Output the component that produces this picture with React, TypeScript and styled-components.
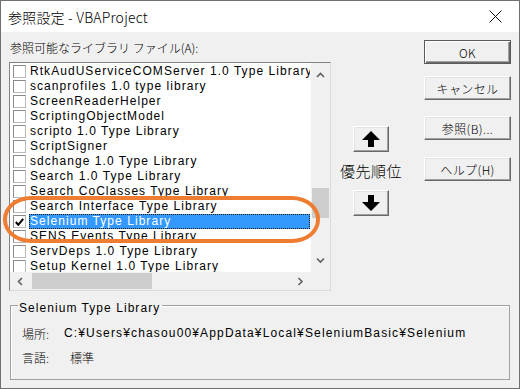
import React from "react";
import styled, { createGlobalStyle, css } from "styled-components";

const uiFont = `"Liberation Sans", "Noto Sans CJK JP", sans-serif`;
const jpFont = `"Noto Sans CJK JP", "Liberation Sans", sans-serif`;

const GlobalStyle = createGlobalStyle`
  html, body {
    margin: 0;
    padding: 0;
    background: #ffffff;
  }
  * {
    box-sizing: border-box;
  }
`;

const Window = styled.div`
  position: relative;
  width: 520px;
  height: 389px;
  border: 1px solid #707070;
  background: #f0f0f0;
  display: flex;
  flex-direction: column;
  color: #000;
  font-family: ${jpFont};
  font-weight: 300;
  overflow: hidden;
`;

const TitleBar = styled.div`
  height: 31px;
  background: #ffffff;
  display: flex;
  align-items: center;
  justify-content: space-between;
  padding-left: 7px;
`;

const Title = styled.div`
  font-size: 14px;
  letter-spacing: 0.2px;
`;

const CloseButton = styled.div`
  width: 46px;
  height: 31px;
  display: flex;
  align-items: center;
  justify-content: center;
  margin-right: 1px;
`;

const Body = styled.div`
  flex: 1;
  display: flex;
  flex-direction: column;
  padding: 0 8px;
`;

const Main = styled.div`
  display: grid;
  grid-template-columns: 322px 80px 1fr;
`;

const LeftPane = styled.div`
  display: flex;
  flex-direction: column;
  padding-top: 9px;
`;

const FieldLabel = styled.div`
  font-size: 12px;
  line-height: 14px;
  height: 14px;
  padding-left: 1px;
  margin-bottom: 7px;
  white-space: nowrap;
`;

const ListBox = styled.div`
  height: 229px;
  border: 1px solid;
  border-color: #828282 #dadada #dadada #828282;
  background: #ffffff;
  display: grid;
  grid-template-columns: 1fr 19px;
  grid-template-rows: 209px 18px;
`;

const Rows = styled.div`
  overflow: hidden;
  padding-top: 1px;
  padding-left: 3px;
  padding-right: 1px;
`;

const Row = styled.div`
  height: 15px;
  display: flex;
  align-items: center;
`;

const CheckBox = styled.div`
  width: 13px;
  height: 13px;
  flex: none;
  border: 1px solid;
  border-color: #8a8a8a #b9b9b9 #b9b9b9 #8a8a8a;
  background: #ffffff;
  display: flex;
  align-items: center;
  justify-content: center;
`;

const ItemText = styled.div<{ $selected?: boolean }>`
  flex: 1;
  margin-left: 3px;
  height: 15px;
  line-height: 15px;
  padding-left: 1px;
  font-family: ${uiFont};
  font-weight: 400;
  font-size: 12px;
  letter-spacing: 1.05px;
  white-space: nowrap;
  overflow: hidden;
  ${({ $selected }) =>
    $selected &&
    css`
      background: #3399ff;
      color: #ffffff;
      outline: 1px dotted #1a1a1a;
      outline-offset: -1px;
    `}
`;

const VScroll = styled.div`
  grid-row: 1;
  grid-column: 2;
  background: #f0f0f0;
  display: flex;
  flex-direction: column;
`;

const HScroll = styled.div`
  grid-row: 2;
  grid-column: 1;
  background: #f0f0f0;
  display: flex;
  align-items: stretch;
`;

const Corner = styled.div`
  grid-row: 2;
  grid-column: 2;
  background: #f0f0f0;
`;

const ScrollButton = styled.div<{ $size: number; $vertical?: boolean }>`
  flex: none;
  ${({ $vertical, $size }) =>
    $vertical ? `height: ${$size}px;` : `width: ${$size}px;`}
  display: flex;
  align-items: center;
  justify-content: center;
`;

const Track = styled.div<{ $vertical?: boolean }>`
  flex: 1;
  display: flex;
  flex-direction: ${({ $vertical }) => ($vertical ? "column" : "row")};
`;

const Thumb = styled.div<{ $vertical?: boolean }>`
  background: #cdcdcd;
  ${({ $vertical }) =>
    $vertical
      ? css`
          margin: 0 1px;
        `
      : css`
          margin: 1px 0;
        `}
`;

const PriorityPane = styled.div`
  display: flex;
  flex-direction: column;
  align-items: center;
  padding-top: 94px;
`;

const raised = css`
  background: #f0f0f0;
  border: 1px solid;
  border-color: #ffffff #696969 #696969 #ffffff;
  box-shadow: inset -1px -1px 0 #a0a0a0, inset 1px 1px 0 #e3e3e3;
`;

const ArrowButton = styled.div`
  ${raised};
  width: 36px;
  height: 26px;
  display: flex;
  align-items: center;
  justify-content: center;
`;

const PriorityLabel = styled.div`
  font-size: 15px;
  line-height: 22px;
  margin: 8px 0;
  letter-spacing: 0.5px;
  white-space: nowrap;
`;

const ButtonColumn = styled.div`
  display: flex;
  flex-direction: column;
  align-items: flex-end;
  padding-top: 8px;
`;

const DialogButton = styled.div<{ $gap: number; $isDefault?: boolean }>`
  ${raised};
  width: 87px;
  margin-top: ${({ $gap }) => $gap}px;
  height: 24px;
  display: flex;
  align-items: center;
  justify-content: center;
  font-size: 12px;
  letter-spacing: 0.4px;
  white-space: nowrap;
  ${({ $isDefault }) =>
    $isDefault &&
    css`
      border-color: #5a5a5a;
      box-shadow: inset 1px 1px 0 #ffffff, inset -1px -1px 0 #696969,
        inset -2px -2px 0 #a0a0a0;
    `}
`;

const GroupBox = styled.fieldset`
  margin: 4px 0 0 1px;
  width: 500px;
  height: 85px;
  padding: 0 8px 0 7px;
  border: 1px solid #a0a0a0;
  box-shadow: inset 1px 1px 0 #ffffff;
`;

const Legend = styled.legend`
  padding: 6px 2px 0 1px;
  font-family: ${uiFont};
  font-weight: 400;
  font-size: 12px;
  line-height: 14px;
  letter-spacing: 1.05px;
`;

const InfoList = styled.div`
  padding-top: 6px;
  padding-left: 4px;
`;

const InfoRow = styled.div`
  display: flex;
  height: 24px;
  align-items: center;
  font-size: 12px;
`;

const InfoKey = styled.span`
  width: 42px;
  flex: none;
`;

const InfoValue = styled.span<{ $indent: number; $latin?: boolean }>`
  margin-left: ${({ $indent }) => $indent}px;
  white-space: nowrap;
  ${({ $latin }) =>
    $latin &&
    css`
      font-family: ${uiFont};
      font-weight: 400;
      letter-spacing: 1.15px;
    `}
`;

const Annotation = styled.div`
  position: absolute;
  left: 2px;
  top: 195px;
  width: 317px;
  height: 47px;
  border: 4px solid #ef7d31;
  border-radius: 28px / 23px;
  pointer-events: none;
`;

const libraries = [
  "RtkAudUServiceCOMServer 1.0 Type Library",
  "scanprofiles 1.0 type library",
  "ScreenReaderHelper",
  "ScriptingObjectModel",
  "scripto 1.0 Type Library",
  "ScriptSigner",
  "sdchange 1.0 Type Library",
  "Search 1.0 Type Library",
  "Search CoClasses Type Library",
  "Search Interface Type Library",
  "Selenium Type Library",
  "SENS Events Type Library",
  "ServDeps 1.0 Type Library",
  "Setup Kernel 1.0 Type Library",
];

const selectedIndex = 10;

const Chevron = ({ dir }: { dir: "up" | "down" | "left" | "right" }) => {
  const paths = {
    up: "M1 5 L4.5 1.5 L8 5",
    down: "M1 1.5 L4.5 5 L8 1.5",
    left: "M5 1 L1.5 4.5 L5 8",
    right: "M1.5 1 L5 4.5 L1.5 8",
  };
  const vertical = dir === "up" || dir === "down";
  return (
    <svg width={vertical ? 9 : 7} height={vertical ? 7 : 9} viewBox={vertical ? "0 0 9 7" : "0 0 7 9"}>
      <path d={paths[dir]} fill="none" stroke="#606060" strokeWidth="1.6" />
    </svg>
  );
};

const BigArrow = ({ down }: { down?: boolean }) => (
  <svg width="18" height="16" viewBox="0 0 18 16">
    <path
      d="M9 0 L18 9 L12 9 L12 16 L6 16 L6 9 L0 9 Z"
      fill="#000"
      transform={down ? "rotate(180 9 8)" : undefined}
    />
  </svg>
);

const App: React.FC = () => {
  return (
    <>
      <GlobalStyle />
      <Window>
        <TitleBar>
          <Title>参照設定 - VBAProject</Title>
          <CloseButton>
            <svg width="13" height="13" viewBox="0 0 13 13">
              <path d="M0.5 0.5 L12.5 12.5 M12.5 0.5 L0.5 12.5" stroke="#111" strokeWidth="1" />
            </svg>
          </CloseButton>
        </TitleBar>
        <Body>
          <Main>
            <LeftPane>
              <FieldLabel>参照可能なライブラリ ファイル(A):</FieldLabel>
              <ListBox>
                <Rows>
                  {libraries.map((name, i) => (
                    <Row key={name}>
                      <CheckBox>
                        {i === selectedIndex && (
                          <svg width="9" height="8" viewBox="0 0 9 8">
                            <path d="M0.8 4 L3.3 6.8 L8.2 0.8" fill="none" stroke="#000" strokeWidth="2" />
                          </svg>
                        )}
                      </CheckBox>
                      <ItemText $selected={i === selectedIndex}>{name}</ItemText>
                    </Row>
                  ))}
                </Rows>
                <VScroll>
                  <ScrollButton $vertical $size={24}>
                    <Chevron dir="up" />
                  </ScrollButton>
                  <Track $vertical>
                    <Thumb $vertical style={{ marginTop: 101, height: 30 }} />
                  </Track>
                  <ScrollButton $vertical $size={24}>
                    <Chevron dir="down" />
                  </ScrollButton>
                </VScroll>
                <HScroll>
                  <ScrollButton $size={21}>
                    <Chevron dir="left" />
                  </ScrollButton>
                  <Track>
                    <Thumb style={{ marginLeft: 1, width: 120 }} />
                  </Track>
                  <ScrollButton $size={21}>
                    <Chevron dir="right" />
                  </ScrollButton>
                </HScroll>
                <Corner />
              </ListBox>
            </LeftPane>
            <PriorityPane>
              <ArrowButton>
                <BigArrow />
              </ArrowButton>
              <PriorityLabel>優先順位</PriorityLabel>
              <ArrowButton>
                <BigArrow down />
              </ArrowButton>
            </PriorityPane>
            <ButtonColumn>
              <DialogButton $gap={0} $isDefault>
                OK
              </DialogButton>
              <DialogButton $gap={12}>キャンセル</DialogButton>
              <DialogButton $gap={16}>参照(B)...</DialogButton>
              <DialogButton $gap={17}>ヘルプ(H)</DialogButton>
            </ButtonColumn>
          </Main>
          <GroupBox>
            <Legend>Selenium Type Library</Legend>
            <InfoList>
              <InfoRow>
                <InfoKey>場所:</InfoKey>
                <InfoValue $indent={0} $latin>
                  C:¥Users¥chasou00¥AppData¥Local¥SeleniumBasic¥Selenium
                </InfoValue>
              </InfoRow>
              <InfoRow>
                <InfoKey>言語:</InfoKey>
                <InfoValue $indent={6}>標準</InfoValue>
              </InfoRow>
            </InfoList>
          </GroupBox>
        </Body>
        <Annotation />
      </Window>
    </>
  );
};

export default App;
